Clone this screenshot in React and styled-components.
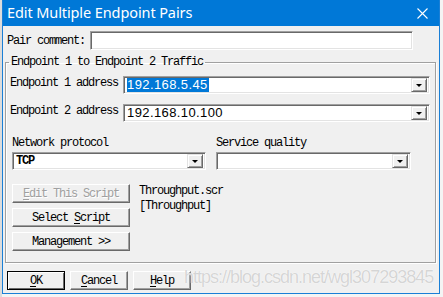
import React from 'react';
import styled, { createGlobalStyle } from 'styled-components';

const GlobalStyle = createGlobalStyle`
  html, body {
    margin: 0;
    padding: 0;
    background: #f4f4f4;
  }
  body {
    width: 443px;
    height: 297px;
    overflow: hidden;
  }
`;

const mono = `"Liberation Mono", "DejaVu Sans Mono", monospace`;

const Page = styled.div`
  display: flex;
  width: 443px;
  height: 297px;
  background: linear-gradient(to right, #dcdcdc 0 2px, #f4f4f4 2px);
`;

const Window = styled.div`
  position: relative;
  margin-left: 2px;
  width: 438px;
  height: 294px;
  box-sizing: border-box;
  border: 1px solid #1a7fd6;
  border-top: none;
  display: flex;
  flex-direction: column;
`;

const TitleBar = styled.div`
  height: 26px;
  flex: none;
  background: #0078d7;
  color: #fff;
  display: flex;
  align-items: center;
  justify-content: space-between;
  padding: 0 11px 0 4px;
  font-family: "Noto Sans", "Open Sans", sans-serif;
  font-size: 14.5px;
  letter-spacing: -0.1px;
`;

const Title = styled.span`
  margin-top: -2px;
`;

const Body = styled.div`
  flex: 1;
  background: #f0f0f0;
  padding: 5px 0 0 0;
  font-family: ${mono};
  font-size: 12px;
  letter-spacing: -1.2px;
  color: #000;
  display: flex;
  flex-direction: column;
`;

const CommentRow = styled.div`
  display: flex;
  align-items: center;
  gap: 5px;
  padding-left: 4px;
  height: 19px;
`;

const Label = styled.span`
  white-space: nowrap;
  width: ${({ w }) => (w ? `${w}px` : 'auto')};
  flex: none;
  line-height: 12px;
`;

const TextInput = styled.div`
  width: ${({ w }) => w}px;
  height: 19px;
  box-sizing: border-box;
  background: #fff;
  border-top: 1px solid #a0a0a0;
  border-left: 1px solid #a0a0a0;
  border-right: 1px solid #fff;
  border-bottom: 1px solid #fff;
  box-shadow: inset 1px 1px #696969, inset -1px -1px #e3e3e3;
`;

const Group = styled.fieldset`
  margin: 6px 0 0 2px;
  width: 431px;
  box-sizing: border-box;
  padding: 0 4px 11px 4px;
  border: 1px solid #a0a0a0;
  box-shadow: inset 1px 1px #fff, 1px 1px #fff;
  min-width: 0;
`;

const Legend = styled.legend`
  margin-left: -1px;
  padding: 0 2px;
  line-height: 12px;
`;

const AddressRow = styled.div`
  display: flex;
  align-items: flex-start;
  gap: 5px;
  margin-top: ${({ top }) => top}px;
  & > span:first-child {
    margin-top: 1px;
  }
`;

const Combo = styled.div`
  width: ${({ w }) => w}px;
  height: 18px;
  box-sizing: border-box;
  background: #fff;
  border-top: 1px solid #a0a0a0;
  border-left: 1px solid #a0a0a0;
  border-right: 1px solid #fff;
  border-bottom: 1px solid #fff;
  box-shadow: inset 1px 1px #696969, inset -1px -1px #e3e3e3;
  display: flex;
  align-items: center;
  padding: 2px 2px 2px 3px;
`;

const ComboText = styled.span`
  flex: 1;
  display: flex;
  align-items: center;
  font-family: ${({ sans }) => (sans ? `"Liberation Sans", Arial, sans-serif` : mono)};
  font-size: ${({ sans }) => (sans ? '13px' : '12px')};
  letter-spacing: ${({ sans }) => (sans ? '0.4px' : '-1.2px')};
  font-weight: ${({ sans }) => (sans ? 'normal' : 'bold')};
  line-height: 14px;
`;

const Selected = styled.span`
  background: #0078d7;
  color: #fff;
  padding-right: 1px;
`;

const DropButton = styled.div`
  width: 16px;
  height: 14px;
  flex: none;
  box-sizing: border-box;
  background: #f0f0f0;
  border-top: 1px solid #e3e3e3;
  border-left: 1px solid #e3e3e3;
  border-right: 1px solid #696969;
  border-bottom: 1px solid #696969;
  box-shadow: inset 1px 1px #fff, inset -1px -1px #a0a0a0;
  display: flex;
  align-items: center;
  justify-content: center;
`;

const Arrow = styled.span`
  width: 0;
  height: 0;
  border-left: 3px solid transparent;
  border-right: 3px solid transparent;
  border-top: 3px solid #000;
  margin-top: 1px;
`;

const SelectGrid = styled.div`
  display: grid;
  grid-template-columns: 194px 195px;
  column-gap: 10px;
  row-gap: 3px;
  margin: 15px 0 0 2px;
`;

const ScriptArea = styled.div`
  display: flex;
  gap: 9px;
  margin: 14px 0 0 2px;
`;

const ButtonColumn = styled.div`
  display: flex;
  flex-direction: column;
  gap: 5px;
`;

const Button = styled.button`
  width: ${({ w }) => w}px;
  height: 19px;
  box-sizing: border-box;
  padding: 0;
  margin: 0;
  background: #f0f0f0;
  font-family: ${mono};
  font-size: 12px;
  letter-spacing: -1.2px;
  color: ${({ disabled }) => (disabled ? '#a0a0a0' : '#000')};
  text-shadow: ${({ disabled }) => (disabled ? '1px 1px #fff' : 'none')};
  border-top: 1px solid ${({ primary }) => (primary ? '#000' : '#fff')};
  border-left: 1px solid ${({ primary }) => (primary ? '#000' : '#fff')};
  border-right: 1px solid ${({ primary }) => (primary ? '#000' : '#696969')};
  border-bottom: 1px solid ${({ primary }) => (primary ? '#000' : '#696969')};
  box-shadow: ${({ primary }) =>
    primary ? 'inset 1px 1px #fff, inset -1px -1px #696969' : 'inset -1px -1px #a0a0a0'};
  text-align: center;
  white-space: pre;
  cursor: default;
`;

const Key = styled.u`
  text-underline-offset: 2px;
`;

const ScriptInfo = styled.div`
  line-height: 15px;
`;

const Footer = styled.div`
  display: flex;
  gap: 5px;
  padding: 8px 0 0 4px;
`;

const Watermark = styled.div`
  position: absolute;
  left: 181px;
  top: 267px;
  font-family: "Liberation Sans", Arial, sans-serif;
  font-size: 18px;
  letter-spacing: -1px;
  color: rgba(200, 200, 200, 0.75);
  text-shadow: 0 0 1px #fff, 0 0 1px #fff;
  pointer-events: none;
  white-space: nowrap;
`;

const CloseIcon = () => (
  <svg width="11" height="11" viewBox="0 0 11 11">
    <path d="M0.5 0.5 L10.5 10.5 M10.5 0.5 L0.5 10.5" stroke="#fff" strokeWidth="1.1" />
  </svg>
);

const DropDown = () => (
  <DropButton>
    <Arrow />
  </DropButton>
);

const App = () => (
  <>
    <GlobalStyle />
    <Page>
      <Window>
        <TitleBar>
          <Title>Edit Multiple Endpoint Pairs</Title>
          <CloseIcon />
        </TitleBar>
        <Body>
          <CommentRow>
            <Label w={78}>Pair comment:</Label>
            <TextInput w={323} />
          </CommentRow>
          <Group>
            <Legend>Endpoint 1 to Endpoint 2 Traffic</Legend>
            <AddressRow top={8}>
              <Label w={108}>Endpoint 1 address</Label>
              <Combo w={307}>
                <ComboText sans>
                  <Selected>192.168.5.45</Selected>
                </ComboText>
                <DropDown />
              </Combo>
            </AddressRow>
            <AddressRow top={10}>
              <Label w={108}>Endpoint 2 address</Label>
              <Combo w={307}>
                <ComboText sans>192.168.10.100</ComboText>
                <DropDown />
              </Combo>
            </AddressRow>
            <SelectGrid>
              <Label>Network protocol</Label>
              <Label>Service quality</Label>
              <Combo w={194}>
                <ComboText>TCP</ComboText>
                <DropDown />
              </Combo>
              <Combo w={195}>
                <ComboText />
                <DropDown />
              </Combo>
            </SelectGrid>
            <ScriptArea>
              <ButtonColumn>
                <Button w={118} disabled>
                  <Key>E</Key>dit This Script
                </Button>
                <Button w={118}>
                  {'Select '}
                  <Key>S</Key>cript
                </Button>
                <Button w={118}>Management &gt;&gt;</Button>
              </ButtonColumn>
              <ScriptInfo>
                Throughput.scr
                <br />
                [Throughput]
              </ScriptInfo>
            </ScriptArea>
          </Group>
          <Footer>
            <Button w={58} primary>
              <Key>O</Key>K
            </Button>
            <Button w={58}>
              <Key>C</Key>ancel
            </Button>
            <Button w={58}>
              <Key>H</Key>elp
            </Button>
          </Footer>
        </Body>
        <Watermark>https://blog.csdn.net/wgl307293845</Watermark>
      </Window>
    </Page>
  </>
);

export default App;
